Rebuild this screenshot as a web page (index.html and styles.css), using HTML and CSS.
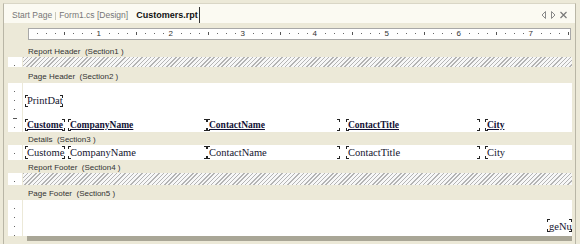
FILE: index.html
```html
<!DOCTYPE html>
<html>
<head>
<meta charset="utf-8">
<title>Customers.rpt</title>
<link rel="stylesheet" href="styles.css">
</head>
<body>
<div class="frame">
  <div class="tabstrip">
    <div class="tabs">
      <span class="tab">Start Page</span>
      <span class="sep"></span>
      <span class="tab">Form1.cs [Design]</span>
      <span class="tab active">Customers.rpt</span>
    </div>
    <div class="ctrls">
      <svg width="28" height="8" viewBox="0 0 28 8">
        <path d="M4.5 0.5 L1 4 L4.5 7.5 Z" fill="none" stroke="#8a8a8a" stroke-width="1"/>
        <path d="M10.5 0.5 L14 4 L10.5 7.5 Z" fill="none" stroke="#8a8a8a" stroke-width="1"/>
        <path d="M19.5 1 L25.5 7 M25.5 1 L19.5 7" stroke="#7a7a7a" stroke-width="1.2"/>
      </svg>
    </div>
  </div>
  <div class="designer">
    <div class="ruler-row">
      <div class="ruler">
        <span class="inch first"><b>1</b></span>
        <span class="inch"><b>2</b></span>
        <span class="inch"><b>3</b></span>
        <span class="inch"><b>4</b></span>
        <span class="inch"><b>5</b></span>
        <span class="inch"><b>6</b></span>
        <span class="inch"><b>7</b></span>
      </div>
    </div>

    <div class="band band-rh">Report Header&nbsp; (Section1 )</div>
    <div class="sec sec-rh">
      <div class="gutter"></div>
      <div class="canvas hatch"></div>
    </div>

    <div class="band band-ph">Page Header&nbsp; (Section2 )</div>
    <div class="sec sec-ph">
      <div class="gutter"></div>
      <div class="canvas">
        <div class="row row-print">
          <div class="fld f-print">PrintDat</div>
        </div>
        <div class="row row-head">
          <div class="fld hd f-cust">Custome</div>
          <div class="fld hd f-comp">CompanyName</div>
          <div class="fld hd f-name">ContactName</div>
          <div class="fld hd f-title">ContactTitle</div>
          <div class="fld hd f-city">City</div>
        </div>
      </div>
    </div>

    <div class="band band-d">Details&nbsp; (Section3 )</div>
    <div class="sec sec-d">
      <div class="gutter"></div>
      <div class="canvas">
        <div class="row row-detail">
          <div class="fld f-cust">Custome</div>
          <div class="fld f-comp">CompanyName</div>
          <div class="fld f-name">ContactName</div>
          <div class="fld f-title">ContactTitle</div>
          <div class="fld f-city">City</div>
        </div>
      </div>
    </div>

    <div class="band band-rf">Report Footer&nbsp; (Section4 )</div>
    <div class="sec sec-rf">
      <div class="gutter"></div>
      <div class="canvas hatch"></div>
    </div>

    <div class="band band-pf">Page Footer&nbsp; (Section5 )</div>
    <div class="sec sec-pf">
      <div class="gutter"></div>
      <div class="canvas">
        <div class="row row-foot">
          <div class="fld f-page">geNu</div>
        </div>
      </div>
    </div>

    <div class="bottom-bar"></div>
  </div>
</div>
</body>
</html>
```

FILE: styles.css
```css
* { box-sizing: border-box; }
html, body { margin: 0; padding: 0; }
body {
  width: 580px;
  height: 244px;
  overflow: hidden;
  background: #ECE9D8;
  font-family: "Liberation Sans", Arial, sans-serif;
}

.frame {
  margin: 3px 0 0 3px;
  width: 573px;
  height: 241px;
  border-left: 1px solid #B9B6A6;
  border-right: 1px solid #B9B6A6;
  border-top: 1px solid #D9D6C6;
  display: flex;
  flex-direction: column;
}

/* tab strip */
.tabstrip {
  height: 19px;
  flex: none;
  background: #FBFAF2;
  display: flex;
  align-items: stretch;
  justify-content: space-between;
}
.tabs {
  display: flex;
  align-items: stretch;
  padding-left: 8px;
}
.tab {
  font-size: 8.5px;
  color: #767676;
  display: flex;
  align-items: center;
  padding-top: 3px;
}
.sep {
  width: 1px;
  background: #C9C7BA;
  margin: 8px 3px 3px 3px;
}
.tab + .tab { margin-left: 8px; }
.tab.active {
  font-weight: bold;
  font-size: 9px;
  color: #111;
  padding-right: 1px;
  border-right: 1px solid #333;
  margin-top: 3px;
  padding-top: 0;
}
.ctrls {
  display: flex;
  align-items: center;
  padding: 3px 6px 0 0;
}
.ctrls svg { display: block; }

/* designer */
.designer {
  flex: 1;
  display: flex;
  flex-direction: column;
  padding: 0 3px 0 4px;
}
.ruler-row {
  height: 17px;
  flex: none;
  padding: 5px 1px 0 20px;
}
.ruler {
  height: 12px;
  border: 1px solid #A8A8A8;
  background-color: #fff;
  background-image:
    repeating-linear-gradient(to right, transparent 0 35px, #555 35px 36px, transparent 36px 72px),
    repeating-linear-gradient(to right, transparent 0 8px, #666 8px 9px);
  background-repeat: no-repeat;
  background-size: 100% 3px, 100% 1px;
  background-position: 0 3px, 0 4px;
  display: flex;
  font-size: 8px;
  color: #333;
}
.inch {
  width: 72px;
  flex: none;
  display: flex;
  justify-content: flex-end;
  align-items: center;
  line-height: 10px;
}
.inch.first { width: 70px; }
.inch b {
  font-weight: normal;
  background: #fff;
  margin-right: -3px;
  padding: 0 1px;
}

.band {
  flex: none;
  display: flex;
  align-items: flex-end;
  padding-left: 20px;
  font-size: 8px;
  line-height: 9px;
  color: #333;
  white-space: pre;
}
.band-rh { height: 17px; padding-bottom: 1px; }
.band-ph { height: 16px; padding-bottom: 2px; }
.band-d  { height: 13px; padding-bottom: 1px; }
.band-rf { height: 13px; padding-bottom: 1px; }
.band-pf { height: 15px; padding-bottom: 2px; }

.sec {
  flex: none;
  display: flex;
  gap: 1px;
}
.sec-rh { height: 10px; }
.sec-ph { height: 49px; }
.sec-d  { height: 15px; }
.sec-rf { height: 12px; }
.sec-pf { height: 36px; }

.gutter {
  width: 14px;
  flex: none;
  background-color: #fff;
  background-image:
    linear-gradient(#555, #555),
    repeating-linear-gradient(to bottom, transparent 0 8px, #666 8px 9px);
  background-repeat: no-repeat;
  background-size: 4px 1px, 1px 100%;
  background-position: 5px 35px, 6px 0;
}
.sec-rh .gutter, .sec-d .gutter, .sec-rf .gutter, .sec-pf .gutter {
  background-size: 0 0, 1px 100%;
}

.canvas {
  flex: 1;
  background: #fff;
  overflow: hidden;
  display: flex;
  flex-direction: column;
}
.hatch {
  background: repeating-linear-gradient(135deg, #B4B4B4 0 1px, #F7F7F7 1px 3px);
}

.row {
  display: flex;
  flex: none;
}
.row-print { margin-top: 12px; padding-left: 2px; }
.row-head { margin-top: 12px; padding-left: 2px; }
.row-detail { margin-top: 1px; padding-left: 2px; }
.row-foot { margin-top: 19px; padding-left: 524px; }

.fld {
  flex: none;
  height: 12px;
  padding-left: 2px;
  overflow: hidden;
  white-space: nowrap;
  font-family: "Liberation Serif", "Times New Roman", serif;
  font-size: 10.5px;
  line-height: 12px;
  color: #14142E;
  background-image:
    linear-gradient(#222, #222), linear-gradient(#222, #222),
    linear-gradient(#222, #222), linear-gradient(#222, #222),
    linear-gradient(#222, #222), linear-gradient(#222, #222),
    linear-gradient(#222, #222), linear-gradient(#222, #222);
  background-repeat: no-repeat;
  background-size: 3px 1px, 1px 3px, 3px 1px, 1px 3px, 3px 1px, 1px 3px, 3px 1px, 1px 3px;
  background-position: left top, left top, right top, right top, left bottom, left bottom, right bottom, right bottom;
}
.hd {
  font-weight: bold;
  font-size: 9.5px;
  text-decoration: underline;
  color: #121236;
}
.row-detail .fld { height: 13px; line-height: 13px; }
.f-print { width: 38px; }
.f-cust { width: 40px; }
.f-comp { width: 139px; margin-left: 3px; }
.f-name { width: 133px; }
.f-title { width: 134px; margin-left: 6px; }
.f-city { width: 120px; margin-left: 5px; }
.f-page { width: 25px; height: 13px; line-height: 15px; }

.bottom-bar {
  flex: none;
  height: 5px;
  margin-left: 19px;
  background: #A9A696;
}
```
